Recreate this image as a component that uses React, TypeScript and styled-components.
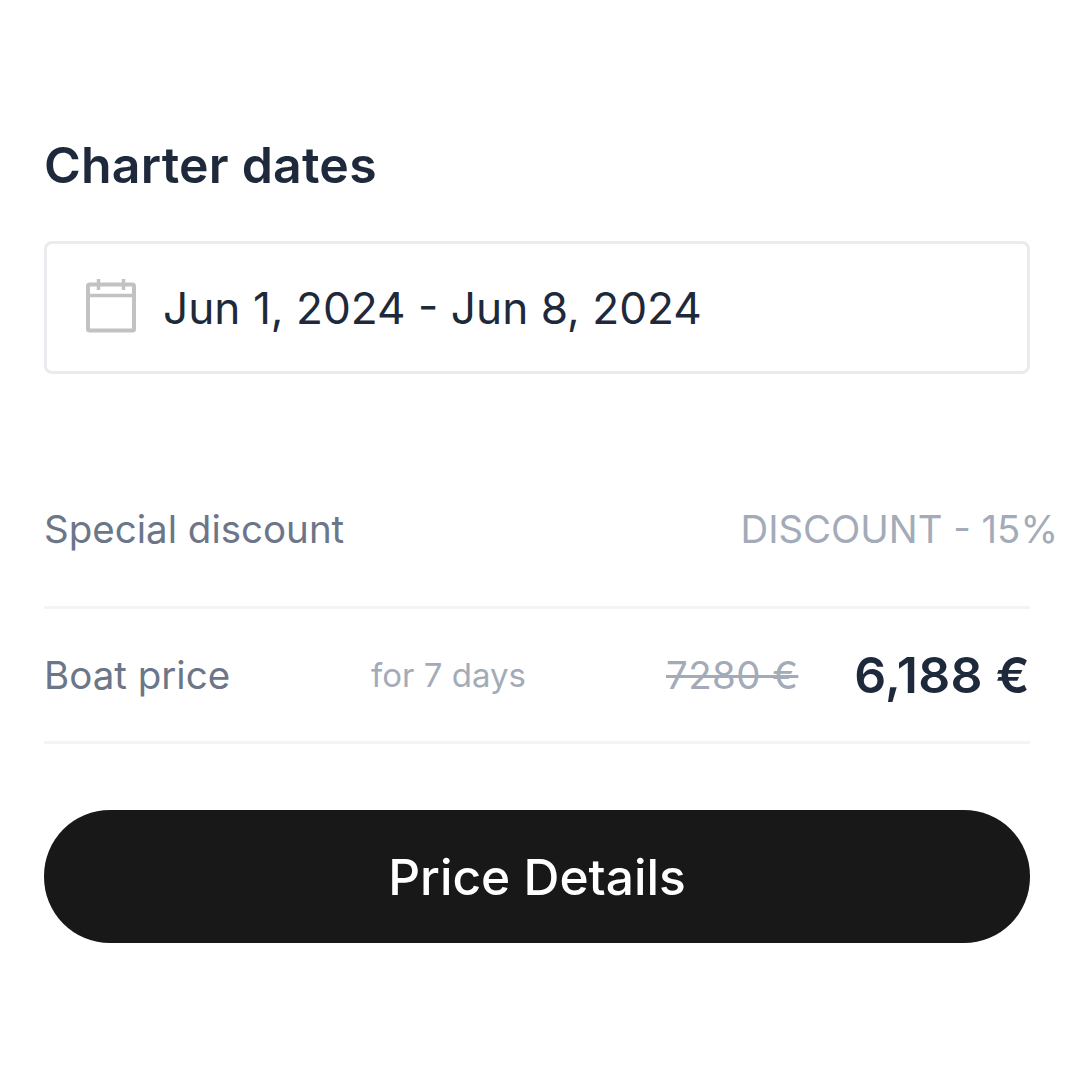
import * as React from "react";
import styled, { createGlobalStyle } from "styled-components";

const GlobalStyle = createGlobalStyle`
  html, body {
    margin: 0;
    padding: 0;
    background: #ffffff;
  }
  body {
    font-family: "Inter", "Liberation Sans", sans-serif;
  }
`;

const CalendarIcon = () => (
  <svg width="50" height="58" viewBox="0 0 50 58" fill="none">
    <rect x="2" y="5.5" width="46" height="46" rx="1.5" stroke="#c2c2c2" strokeWidth="4" />
    <path d="M2 16.5h46" stroke="#c2c2c2" strokeWidth="3.5" />
    <path d="M12.5 0v11M37.5 0v11" stroke="#c2c2c2" strokeWidth="3.5" />
  </svg>
);

export default function App() {
  return (
    <>
      <GlobalStyle />
      <Page>
        <Title>Charter dates</Title>
        <DateField>
          <CalendarIcon />
          <DateText>Jun 1, 2024 - Jun 8, 2024</DateText>
        </DateField>
        <DiscountRow>
          <RowLabel>Special discount</RowLabel>
          <DiscountValue>DISCOUNT - 15%</DiscountValue>
        </DiscountRow>
        <PriceRow>
          <PriceLabel>Boat price</PriceLabel>
          <Days>for 7 days</Days>
          <OldPrice>7280 €</OldPrice>
          <Price>6,188 €</Price>
        </PriceRow>
        <DetailsButton>Price Details</DetailsButton>
      </Page>
    </>
  );
}

const Page = styled.main`
  width: 986px;
  height: 1080px;
  box-sizing: border-box;
  margin-left: 44px;
  padding-top: 136px;
  display: flex;
  flex-direction: column;
  background: #ffffff;
`;

const Title = styled.h2`
  margin: 0 0 47px 0;
  font-size: 50px;
  line-height: 58px;
  font-weight: 600;
  letter-spacing: 0.2px;
  color: #1e293b;
`;

const DateField = styled.div`
  height: 133px;
  box-sizing: border-box;
  border: 3px solid #e9ebef;
  border-radius: 8px;
  padding: 0 0 0 39px;
  display: flex;
  align-items: center;
  gap: 27px;
`;

const DateText = styled.span`
  font-size: 44.2px;
  font-weight: 400;
  color: #1e293b;
`;

const DiscountRow = styled.div`
  margin-top: 112px;
  height: 123px;
  padding-bottom: 34px;
  box-sizing: border-box;
  border-bottom: 3px solid #f3f4f6;
  display: flex;
  justify-content: space-between;
  align-items: center;
`;

const RowLabel = styled.span`
  font-size: 38.5px;
  color: #6b7689;
`;

const DiscountValue = styled.span`
  margin-right: -28px;
  font-size: 38.3px;
  color: #a3abb9;
`;

const PriceRow = styled.div`
  height: 135px;
  box-sizing: border-box;
  border-bottom: 3px solid #f3f4f6;
  display: flex;
  align-items: center;
`;

const PriceLabel = styled(RowLabel)`
  width: 327px;
`;

const Days = styled.span`
  flex: 1;
  font-size: 33px;
  color: #a3abb9;
`;

const OldPrice = styled.span`
  margin-right: 56px;
  font-size: 38.5px;
  letter-spacing: 0.4px;
  color: #a3abb9;
  text-decoration: line-through;
`;

const Price = styled.span`
  font-size: 50px;
  font-weight: 600;
  letter-spacing: 0.3px;
  color: #1e293b;
`;

const DetailsButton = styled.button`
  margin-top: 66px;
  height: 133px;
  border: 0;
  border-radius: 66px;
  background: #181818;
  color: #ffffff;
  font-family: inherit;
  font-size: 49.7px;
  font-weight: 500;
`;
